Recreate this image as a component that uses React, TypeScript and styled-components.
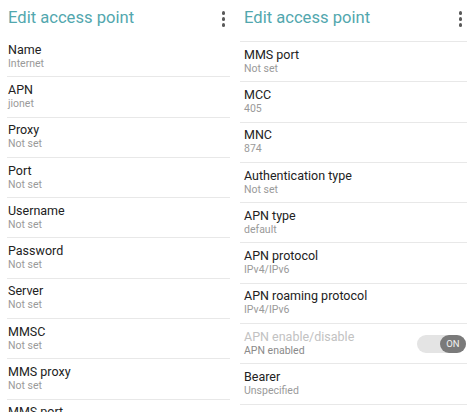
import React from 'react';
import styled, { createGlobalStyle } from 'styled-components';

interface Entry {
  label: string;
  value: string;
  disabled?: boolean;
  toggle?: boolean;
}

const GlobalStyle = createGlobalStyle`
  html, body {
    margin: 0;
    padding: 0;
    background: #fff;
  }
  body {
    font-family: Roboto, "Noto Sans", "Liberation Sans", sans-serif;
    -webkit-font-smoothing: antialiased;
  }
`;

const Screen = styled.div`
  display: flex;
  width: 474px;
  height: 412px;
  overflow: hidden;
  background: #fff;
`;

const Panel = styled.div<{ $left: number; $right: number }>`
  width: 237px;
  flex: none;
  box-sizing: border-box;
  padding: 0 ${(p) => p.$right}px 0 ${(p) => p.$left}px;
  display: flex;
  flex-direction: column;
`;

const Header = styled.div<{ $height: number; $indent: number; $ruled?: boolean }>`
  height: ${(p) => p.$height}px;
  flex: none;
  box-sizing: border-box;
  display: flex;
  align-items: flex-start;
  justify-content: space-between;
  padding: 6px 0 0 ${(p) => p.$indent}px;
  border-bottom: 1px solid ${(p) => (p.$ruled ? '#e8e8e8' : 'transparent')};
`;

const Title = styled.div`
  font-size: 16.6px;
  color: #52a7ae;
  line-height: 23px;
`;

const Dots = styled.div`
  display: flex;
  flex-direction: column;
  gap: 2.5px;
  padding: 5px 5px 0 0;
  span {
    width: 3.5px;
    height: 3.5px;
    border-radius: 50%;
    background: #5a5a5a;
  }
`;

const Row = styled.div<{ $indent: number }>`
  height: 40.3px;
  flex: none;
  box-sizing: border-box;
  border-bottom: 1px solid #e8e8e8;
  display: flex;
  align-items: center;
  justify-content: space-between;
  padding: 0 1px 0 ${(p) => p.$indent}px;
`;

const Texts = styled.div`
  display: flex;
  flex-direction: column;
  padding-bottom: 1px;
`;

const Label = styled.div<{ $disabled?: boolean }>`
  font-size: 12.5px;
  line-height: 15px;
  color: ${(p) => (p.$disabled ? '#c2c2c2' : '#222')};
`;

const Value = styled.div<{ $disabled?: boolean }>`
  font-size: 10.5px;
  line-height: 14px;
  color: ${(p) => (p.$disabled ? '#8a8a8a' : '#9a9a9a')};
`;

const Track = styled.div`
  width: 49px;
  height: 18px;
  border-radius: 9px;
  background: #e4e4e4;
  display: flex;
  justify-content: flex-end;
`;

const Thumb = styled.div`
  width: 26px;
  height: 18px;
  border-radius: 9px;
  background: #7a7a7a;
  color: #f2f2f2;
  font-size: 9.5px;
  display: flex;
  align-items: center;
  justify-content: center;
`;

const leftItems: Entry[] = [
  { label: 'Name', value: 'Internet' },
  { label: 'APN', value: 'jionet' },
  { label: 'Proxy', value: 'Not set' },
  { label: 'Port', value: 'Not set' },
  { label: 'Username', value: 'Not set' },
  { label: 'Password', value: 'Not set' },
  { label: 'Server', value: 'Not set' },
  { label: 'MMSC', value: 'Not set' },
  { label: 'MMS proxy', value: 'Not set' },
  { label: 'MMS port', value: 'Not set' },
];

const rightItems: Entry[] = [
  { label: 'MMS port', value: 'Not set' },
  { label: 'MCC', value: '405' },
  { label: 'MNC', value: '874' },
  { label: 'Authentication type', value: 'Not set' },
  { label: 'APN type', value: 'default' },
  { label: 'APN protocol', value: 'IPv4/IPv6' },
  { label: 'APN roaming protocol', value: 'IPv4/IPv6' },
  { label: 'APN enable/disable', value: 'APN enabled', disabled: true, toggle: true },
  { label: 'Bearer', value: 'Unspecified' },
];

const Item: React.FC<{ entry: Entry; indent: number }> = ({ entry, indent }) => (
  <Row $indent={indent}>
    <Texts>
      <Label $disabled={entry.disabled}>{entry.label}</Label>
      <Value $disabled={entry.disabled}>{entry.value}</Value>
    </Texts>
    {entry.toggle && (
      <Track>
        <Thumb>ON</Thumb>
      </Track>
    )}
  </Row>
);

const Menu: React.FC = () => (
  <Dots>
    <span />
    <span />
    <span />
  </Dots>
);

const App: React.FC = () => (
  <>
    <GlobalStyle />
    <Screen>
      <Panel $left={7} $right={7}>
        <Header $height={37} $indent={1}>
          <Title>Edit access point</Title>
          <Menu />
        </Header>
        {leftItems.map((e) => (
          <Item key={e.label} entry={e} indent={1} />
        ))}
      </Panel>
      <Panel $left={3} $right={7}>
        <Header $height={42} $indent={4} $ruled>
          <Title>Edit access point</Title>
          <Menu />
        </Header>
        {rightItems.map((e) => (
          <Item key={e.label} entry={e} indent={4} />
        ))}
      </Panel>
    </Screen>
  </>
);

export default App;
